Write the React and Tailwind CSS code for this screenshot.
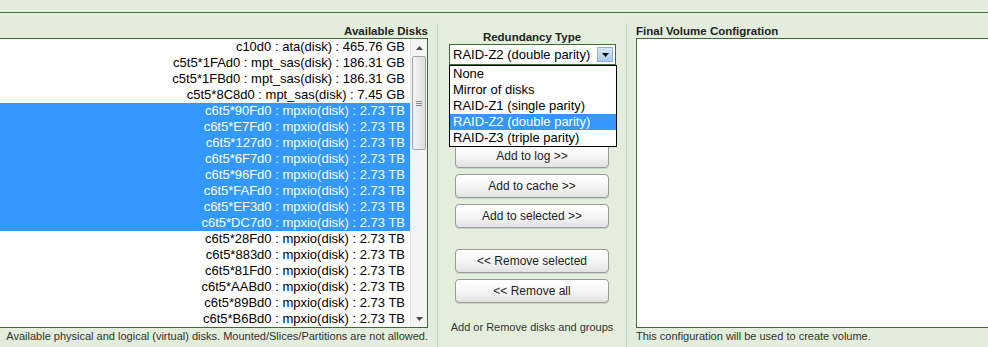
import React from "react";

const rows = [
  { t: "c10d0 : ata(disk) : 465.76 GB" },
  { t: "c5t5*1FAd0 : mpt_sas(disk) : 186.31 GB" },
  { t: "c5t5*1FBd0 : mpt_sas(disk) : 186.31 GB" },
  { t: "c5t5*8C8d0 : mpt_sas(disk) : 7.45 GB" },
  { t: "c6t5*90Fd0 : mpxio(disk) : 2.73 TB", s: true },
  { t: "c6t5*E7Fd0 : mpxio(disk) : 2.73 TB", s: true },
  { t: "c6t5*127d0 : mpxio(disk) : 2.73 TB", s: true },
  { t: "c6t5*6F7d0 : mpxio(disk) : 2.73 TB", s: true },
  { t: "c6t5*96Fd0 : mpxio(disk) : 2.73 TB", s: true },
  { t: "c6t5*FAFd0 : mpxio(disk) : 2.73 TB", s: true },
  { t: "c6t5*EF3d0 : mpxio(disk) : 2.73 TB", s: true },
  { t: "c6t5*DC7d0 : mpxio(disk) : 2.73 TB", s: true },
  { t: "c6t5*28Fd0 : mpxio(disk) : 2.73 TB" },
  { t: "c6t5*883d0 : mpxio(disk) : 2.73 TB" },
  { t: "c6t5*81Fd0 : mpxio(disk) : 2.73 TB" },
  { t: "c6t5*AABd0 : mpxio(disk) : 2.73 TB" },
  { t: "c6t5*89Bd0 : mpxio(disk) : 2.73 TB" },
  { t: "c6t5*B6Bd0 : mpxio(disk) : 2.73 TB" },
];

const options = [
  "None",
  "Mirror of disks",
  "RAID-Z1 (single parity)",
  "RAID-Z2 (double parity)",
  "RAID-Z3 (triple parity)",
];

function Btn({ children, className = "" }) {
  return (
    <div
      className={
        "ml-[17px] w-[154px] h-[24px] rounded-[4px] border border-[#9a9a9a] bg-gradient-to-b from-[#ffffff] via-[#f6f6f6] to-[#e2e2e2] shadow-[0_1px_0_#c9d6c4] flex items-center justify-center text-[12px] text-[#222] " +
        className
      }
    >
      {children}
    </div>
  );
}

function Tri({ up }) {
  return (
    <svg width="7" height="4" viewBox="0 0 7 4">
      {up ? (
        <path d="M0 4 L3.5 0 L7 4 Z" fill="#4a4a4a" />
      ) : (
        <path d="M0 0 L7 0 L3.5 4 Z" fill="#4a4a4a" />
      )}
    </svg>
  );
}

export default function App() {
  return (
    <div className="w-[988px] h-[347px] overflow-hidden bg-[#e2eedb] font-['Liberation_Sans',Arial,sans-serif] text-black">
      <div className="h-[12px]" />
      <div className="h-px bg-[#40703a]" />
      <div className="flex h-[334px]">
        {/* Left column */}
        <div className="w-[437px] shrink-0 pt-[11px] pr-[9px] flex flex-col">
          <div className="h-[14px] leading-[14px] text-right text-[11.5px] font-bold text-[#222]">
            Available Disks
          </div>
          <div className="h-[290px] border-t border-r border-b border-[#3c6b34] bg-white flex overflow-hidden">
            <div className="flex-1 flex flex-col">
              {rows.map((r, i) => (
                <div
                  key={i}
                  className={
                    "h-[16px] shrink-0 leading-[16px] text-[13px] text-right pr-[5px] whitespace-nowrap " +
                    (r.s ? "bg-[#3399ff] text-white" : "text-black")
                  }
                >
                  {r.t}
                </div>
              ))}
            </div>
            <div className="w-[17px] shrink-0 bg-[#f4f4f4] border-l border-[#e4e4e4] flex flex-col">
              <div className="h-[17px] flex items-center justify-center">
                <Tri up />
              </div>
              <div className="h-[94px] mx-[1px] rounded-[2px] border border-[#a4a4a4] bg-gradient-to-r from-[#f5f5f5] to-[#dedede] flex items-center justify-center">
                <div className="flex flex-col gap-[1px]">
                  <div className="w-[6px] h-px bg-[#8a8a8a]" />
                  <div className="w-[6px] h-px bg-[#8a8a8a]" />
                  <div className="w-[6px] h-px bg-[#8a8a8a]" />
                </div>
              </div>
              <div className="flex-1" />
              <div className="h-[17px] flex items-center justify-center">
                <Tri />
              </div>
            </div>
          </div>
          <div className="h-[14px] leading-[14px] mt-[1px] text-right text-[11px] text-[#333] whitespace-nowrap">
            Available physical and logical (virtual) disks. Mounted/Slices/Partitions are not allowed.
          </div>
        </div>

        <div className="w-px shrink-0 mt-[11px] bg-[#c6d5c0]" />

        {/* Middle column */}
        <div className="w-[188px] shrink-0 pt-[17px] flex flex-col bg-[#e3efdc]">
          <div className="h-[14px] leading-[14px] text-center text-[11.5px] font-bold text-[#222]">
            Redundancy Type
          </div>
          <div className="relative ml-[11px] w-[167px]">
            <div className="h-[21px] border border-[#3c6b34] bg-white flex items-center pl-[3px] pr-[2px]">
              <span className="flex-1 text-[13px] leading-[16px] whitespace-nowrap">RAID-Z2 (double parity)</span>
              <div className="w-[16px] h-[15px] border border-[#8eb1d8] bg-gradient-to-b from-[#d6e6f8] to-[#aecbed] flex items-center justify-center">
                <svg width="7" height="4" viewBox="0 0 7 4">
                  <path d="M0 0 L7 0 L3.5 4 Z" fill="#000" />
                </svg>
              </div>
            </div>
            <div className="absolute left-0 top-[21px] w-[168px] border border-black bg-white z-10">
              {options.map((o) => (
                <div
                  key={o}
                  className={
                    "h-[16px] leading-[16px] text-[13px] pl-[3px] whitespace-nowrap " +
                    (o === "RAID-Z2 (double parity)" ? "bg-[#3399ff] text-white" : "text-black")
                  }
                >
                  {o}
                </div>
              ))}
            </div>
          </div>
          <div className="h-[79px]" />
          <Btn>Add to log &gt;&gt;</Btn>
          <Btn className="mt-[6px]">Add to cache &gt;&gt;</Btn>
          <Btn className="mt-[6px]">Add to selected &gt;&gt;</Btn>
          <Btn className="mt-[21px]">&lt;&lt; Remove selected</Btn>
          <Btn className="mt-[6px]">&lt;&lt; Remove all</Btn>
          <div className="mt-[17px] h-[14px] leading-[14px] text-center text-[11px] text-[#333] whitespace-nowrap">
            Add or Remove disks and groups
          </div>
        </div>

        <div className="w-px shrink-0 mt-[11px] bg-[#c6d5c0]" />

        {/* Right column */}
        <div className="flex-1 pt-[11px] pl-[9px] flex flex-col overflow-hidden">
          <div className="h-[14px] leading-[14px] text-[11.5px] font-bold text-[#222] whitespace-nowrap">
            Final Volume Configration
          </div>
          <div className="h-[290px] w-[380px] border-t border-l border-b border-[#3c6b34] bg-white" />
          <div className="h-[14px] leading-[14px] mt-[1px] text-[11px] text-[#333] whitespace-nowrap">
            This configuration will be used to create volume.
          </div>
        </div>
      </div>
    </div>
  );
}
